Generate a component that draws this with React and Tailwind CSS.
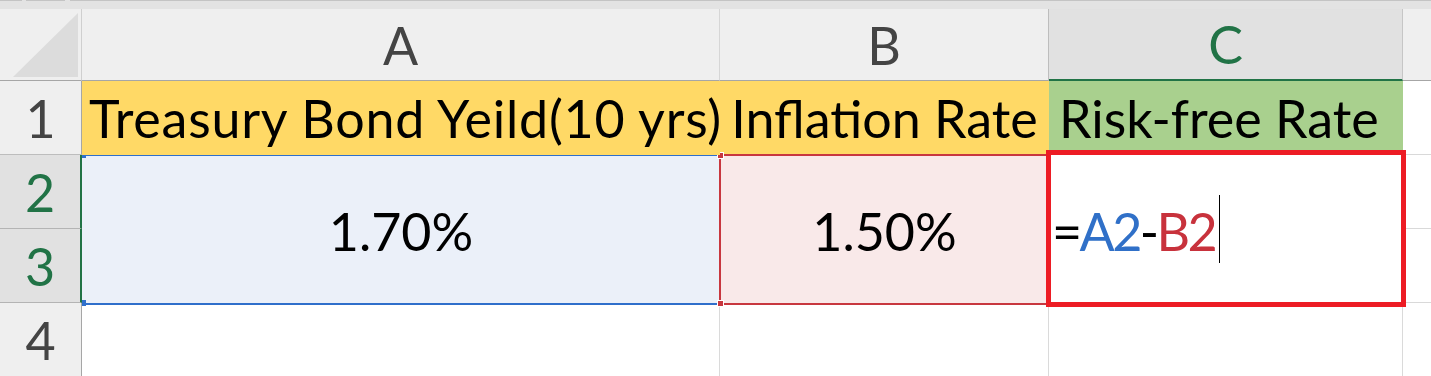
export default function App() {
  const hdr = "flex items-center justify-center text-[#444444]";
  return (
    <div className="w-[1431px] h-[376px] overflow-hidden bg-white font-['Lato',sans-serif] text-[52px] text-black">
      <div className="h-[9px] bg-[#e3e3e3] flex items-start">
        <div className="h-px w-[22px] bg-[#c4c4c4]" />
        <div className="h-px w-[4px]" />
        <div className="h-px w-[39px] bg-[#c4c4c4]" />
        <div className="h-px w-[5px]" />
        <div className="h-px flex-1 bg-[#c4c4c4]" />
      </div>
      <div className="grid grid-cols-[82px_638px_329px_354px_28px] grid-rows-[72px_74px_74px_74px_74px]">
        {/* header row */}
        <div className="bg-[#efefef] border-r border-b border-r-[#cfcfcf] border-b-[#a6a6a6] relative">
          <svg className="absolute left-0 top-0" width="80" height="71">
            <polygon points="13,68 78,68 78,4" fill="#dcdcdc" />
          </svg>
        </div>
        <div className={`${hdr} bg-[#efefef] border-r border-b border-r-[#d6d6d6] border-b-[#a6a6a6]`}>A</div>
        <div className={`${hdr} bg-[#efefef] border-r border-b border-r-[#bdbdbd] border-b-[#a6a6a6]`}>B</div>
        <div className="flex items-center justify-center text-[#217346] bg-[#e1e1e1] border-r border-b-2 border-r-[#c6c6c6] border-b-[#217346]">C</div>
        <div className="bg-[#efefef] border-b border-b-[#a6a6a6]" />

        {/* row 1 */}
        <div className={`${hdr} bg-[#efefef] border-r border-b border-r-[#a6a6a6] border-b-[#bdbdbd]`}>1</div>
        <div className="bg-[#ffd966] flex items-end pl-[7px] pb-[6px] whitespace-nowrap overflow-visible relative z-[1]">
          <span className="leading-[normal] tracking-[0.75px]">Treasury Bond Yeild(10 yrs)</span>
        </div>
        <div className="bg-[#ffd966] flex items-end justify-center pb-[6px] whitespace-nowrap">
          <span className="leading-[normal]">Inflation Rate</span>
        </div>
        <div className="bg-[#a9d08e] flex items-end pl-[10px] pb-[6px] whitespace-nowrap">
          <span className="leading-[normal]">Risk-free Rate</span>
        </div>
        <div className="border-b border-b-[#d9d9d9]" />

        {/* row 2 */}
        <div className="flex items-center justify-center text-[#217346] bg-[#e1e1e1] border-r-2 border-b border-r-[#217346] border-b-[#b4b4b4] relative z-[2]">2</div>
        <div className="row-span-2 bg-[#ebf0f9] relative flex items-center justify-center pt-[3px]">
          <span className="leading-[normal]">1.70%</span>
          <div className="absolute left-0 top-[-1px] right-[-1px] bottom-[-2px] border-y-2 border-r-2 border-[#2f6fcb]" />
          <div className="absolute left-0 top-[-3px] w-[4px] h-[6px] bg-[#2f6fcb]" />
          <div className="absolute left-0 bottom-[-3px] w-[4px] h-[6px] bg-[#2f6fcb]" />
        </div>
        <div className="row-span-2 bg-[#f9e9e9] relative flex items-center justify-center pt-[3px]">
          <span className="leading-[normal]">1.50%</span>
          <div className="absolute left-[-1px] top-[-1px] right-[-1px] bottom-[-2px] border-2 border-[#c8373f]" />
          <div className="absolute left-[-3px] top-[-3px] w-[7px] h-[7px] bg-[#c8373f] border border-white" />
          <div className="absolute left-[-3px] bottom-[-4px] w-[7px] h-[7px] bg-[#c8373f] border border-white" />
        </div>
        <div className="row-span-2 bg-white relative flex items-center pl-[3px] pt-[3px] tracking-[-2.6px]">
          <span className="leading-[normal]">=</span>
          <span className="leading-[normal] text-[#3070c8]">A2</span>
          <span className="leading-[normal]">-</span>
          <span className="leading-[normal] text-[#c8323c]">B2</span>
          <span className="inline-block w-px h-[68px] bg-black ml-[4px] mt-[-3px]" />
          <div className="absolute left-[-3px] top-[-5px] right-[-3px] bottom-[-4px] border-[5px] border-[#ed1c24]" />
        </div>
        <div className="border-b border-b-[#d9d9d9]" />

        {/* row 3 */}
        <div className="flex items-center justify-center text-[#217346] bg-[#e1e1e1] border-r-2 border-b border-r-[#217346] border-b-[#b4b4b4] relative z-[2]">3</div>
        <div className="border-b border-b-[#d9d9d9]" />

        {/* row 4 */}
        <div className={`${hdr} bg-[#efefef] border-r border-r-[#a6a6a6]`}>4</div>
        <div className="border-r border-r-[#dadada]" />
        <div className="border-r border-r-[#dadada]" />
        <div className="border-r border-r-[#dadada]" />
        <div />
      </div>
    </div>
  );
}
